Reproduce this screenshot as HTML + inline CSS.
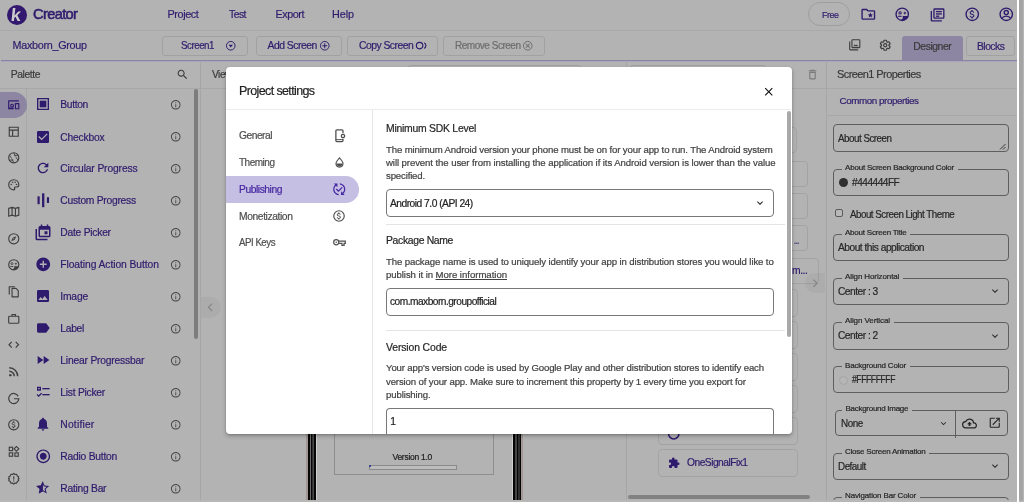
<!DOCTYPE html>
<html lang="en">
<head>
<meta charset="utf-8">
<title>Creator</title>
<style>
*{box-sizing:border-box;margin:0;padding:0}
html,body{width:1024px;height:502px;overflow:hidden}
body{background:#b3b3b3;font-family:"Liberation Sans",sans-serif;position:relative;color:#2f1b6d}
#w{position:absolute;left:0;top:0;width:1024px;height:502px;overflow:hidden;will-change:transform}
.a{position:absolute}
.t{position:absolute;white-space:nowrap;font-size:10.2px;line-height:12px;letter-spacing:-.1px;-webkit-text-stroke:.2px}
.tk{position:absolute;white-space:nowrap}
.p{color:#2f1b6d}
.g{color:#3d3d3d}
svg{position:absolute;overflow:visible}
/* top bar */
#topbar{left:0;top:0;width:1017px;height:31px;border-bottom:1px solid #a9a9a9}
#bar2{left:0;top:32px;width:1017px;height:28px}
#pline{left:1px;top:60px;width:1016px;height:2px;background:linear-gradient(#8a83a5 0,#8a83a5 50%,#aaa5b9 50%,#aaa5b9 100%)}
.btn{position:absolute;border:1px solid #a4a4a4;border-radius:3px;height:21px;top:36px}
/* palette */
.row{position:absolute;left:27px;width:166px;height:32px}
.row .t{left:33px;top:10px;font-size:10.2px}
/* props */
.fs{position:absolute;left:834px;width:175px;border:1px solid #5a5a5a;border-radius:4px}
.lg{position:absolute;left:7px;top:-6px;padding:0 4px;background:#b3b3b3;font-size:7.6px;line-height:10px;color:#2b2b2b;white-space:nowrap}
.fv{position:absolute;left:4px;top:7px;font-size:10px;line-height:12px;color:#2b2b2b;white-space:nowrap}
/* dialog */
#dlg{left:226px;top:67px;width:566px;height:367px;background:#fff;border-radius:4px;box-shadow:0 2px 4px rgba(0,0,0,.26),0 1px 2px rgba(0,0,0,.12);overflow:hidden;color:#333}
#dlg .para{position:absolute;left:160px;font-size:9.33px;line-height:13.33px;color:#404040;white-space:nowrap}
#dlg .h{position:absolute;left:160px;font-size:10.6px;line-height:13px;color:#2a2a2a;white-space:nowrap;word-spacing:1.5px}
#dlg .inp{position:absolute;left:160px;width:388px;height:28px;border:1px solid #7a7a7a;border-radius:4px}
#dlg .hr{position:absolute;left:160px;width:399px;height:1px;background:#e4e4e4}
.nav{position:absolute;left:13px;font-size:10.2px;line-height:12px;color:#555;white-space:nowrap}
.cbox{position:absolute;border:1px solid #a2a2a2;border-radius:4px;height:26px}
</style>
</head>
<body>
<div id="w">
<!-- TOPBAR -->
<div id="topbar" class="a"></div>
<div id="bar2" class="a"></div>
<div id="pline" class="a"></div>
<!-- top bar -->
<div class="a" style="left:6.9px;top:4.6px;width:20px;height:20px;border-radius:50%;background:#32186e"></div>
<div class="tk" style="left:11.4px;top:4.7px;font-size:18px;line-height:20px;font-weight:bold;color:#cbcbcb;letter-spacing:0;transform:skewX(-6deg)">k</div>
<div class="t" style="left:33.00px;top:5.90px;font-size:14.6px;line-height:17px;letter-spacing:-0.624px;color:#2f1b6d;-webkit-text-stroke:.55px;">Creator</div>
<div class="t" style="left:167.50px;top:7.20px;font-size:10.8px;line-height:14px;letter-spacing:-0.373px;color:#2f1b6d;">Project</div>
<div class="t" style="left:228.50px;top:7.20px;font-size:10.8px;line-height:14px;letter-spacing:-0.540px;color:#2f1b6d;transform:scaleX(0.9628);transform-origin:0 50%;">Test</div>
<div class="t" style="left:275.50px;top:7.20px;font-size:10.8px;line-height:14px;letter-spacing:-0.452px;color:#2f1b6d;">Export</div>
<div class="t" style="left:332.00px;top:7.20px;font-size:10.8px;line-height:14px;letter-spacing:-0.053px;color:#2f1b6d;">Help</div>
<div class="a" style="left:808px;top:2px;width:42px;height:24px;border:1px solid #9e9e9e;border-radius:12px"></div>
<div class="t" style="left:821.50px;top:8.60px;font-size:9.6px;line-height:12px;letter-spacing:-0.480px;color:#2f1b6d;transform:scaleX(0.9263);transform-origin:0 50%;">Free</div>
<svg style="left:860.10px;top:5.80px;color:#2f1b6d;" width="16.6" height="16.6" viewBox="0 0 24 24" fill="#2f1b6d"><path fill-rule="evenodd" d="M2 6a2 2 0 0 1 2-2h6l2 2h8a2 2 0 0 1 2 2v10a2 2 0 0 1-2 2H4a2 2 0 0 1-2-2zM4 6v12h16V8h-8.800l-2-2z"/><path d="M15 9.500l1.100 2.400 2.600.3-1.900 1.800.5 2.600-2.300-1.300-2.300 1.300.5-2.600-1.900-1.800 2.600-.3z"/></svg>
<svg style="left:894.15px;top:5.85px;color:#2f1b6d;" width="16.5" height="16.5" viewBox="0 0 24 24" fill="#2f1b6d"><circle cx="12" cy="12" r="9" fill="none" stroke="currentColor" stroke-width="2"/><circle cx="8.800" cy="10" r="1.700" fill="none" stroke="currentColor" stroke-width="1.500"/><path d="M15.800 7.800l.8 1.700 1.700.8-1.700.8-.8 1.700-.8-1.700-1.700-.8 1.700-.8z"/><path d="M12.500 14.500h8.300A9 9 0 0 1 10.500 20.800l.5-1.800 2-1z"/><rect x="6" y="14.200" width="5" height="1.600"/></svg>
<svg style="left:929.60px;top:6.60px;color:#2f1b6d;" width="15.8" height="15.8" viewBox="0 0 24 24" fill="#2f1b6d"><path fill-rule="evenodd" d="M7 2h13a2 2 0 0 1 2 2v12a2 2 0 0 1-2 2H7a2 2 0 0 1-2-2V4a2 2 0 0 1 2-2zM7 4v12h13V4z"/><path d="M1 6h2v14h15v2H3a2 2 0 0 1-2-2z"/><rect x="9" y="6" width="9" height="2"/><rect x="9" y="9.500" width="9" height="2"/><rect x="9" y="13" width="5" height="2"/></svg>
<svg style="left:963.75px;top:6.25px;color:#2f1b6d;" width="16.5" height="16.5" viewBox="0 0 24 24" fill="#2f1b6d"><circle cx="12" cy="12" r="9" fill="none" stroke="currentColor" stroke-width="2"/><g transform="translate(12 12) scale(.68) translate(-12 -12)"><path d="M11.8 10.9c-2.27-.59-3-1.2-3-2.15 0-1.09 1.01-1.85 2.7-1.85 1.78 0 2.44.85 2.5 2.1h2.21c-.07-1.72-1.12-3.3-3.21-3.81V3h-3v2.16c-1.94.42-3.5 1.68-3.5 3.61 0 2.31 1.91 3.46 4.7 4.13 2.5.6 3 1.48 3 2.41 0 .69-.49 1.79-2.7 1.79-2.06 0-2.87-.92-2.98-2.1h-2.2c.12 2.19 1.76 3.42 3.68 3.83V21h3v-2.15c1.95-.37 3.5-1.5 3.5-3.55 0-2.84-2.43-3.81-4.7-4.4z" /></g></svg>
<svg style="left:998.45px;top:6.25px;color:#2f1b6d;" width="16.5" height="16.5" viewBox="0 0 24 24" fill="#2f1b6d"><circle cx="12" cy="12" r="9" fill="none" stroke="currentColor" stroke-width="2"/><circle cx="12" cy="9.5" r="3" fill="none" stroke="currentColor" stroke-width="2"/><path d="M5.5 18.2c1.4-2.3 3.7-3.4 6.5-3.4s5.100 1.100 6.500 3.400" fill="none" stroke="currentColor" stroke-width="2"/></svg>
<!-- bar2 -->
<div class="t" style="left:12.50px;top:38.20px;font-size:10.8px;line-height:14px;letter-spacing:-0.295px;color:#2f1b6d;">Maxborn_Group</div>
<div class="a" style="left:161.5px;top:36px;width:86.0px;height:19.5px;border:1px solid #a1a1a1;border-radius:3px"></div>
<div class="t" style="left:181.00px;top:38.90px;font-size:10.4px;line-height:14px;letter-spacing:-0.520px;color:#2f1b6d;transform:scaleX(0.9412);transform-origin:0 50%;">Screen1</div>
<svg style="left:225.05px;top:39.65px;color:#2f1b6d;" width="11.5" height="11.5" viewBox="0 0 24 24" fill="#2f1b6d"><circle cx="12" cy="12" r="9" fill="none" stroke="currentColor" stroke-width="2"/><path d="M7.500 10h9L12 15.500z"/></svg>
<div class="a" style="left:256px;top:36px;width:85.5px;height:19.5px;border:1px solid #a1a1a1;border-radius:3px"></div>
<div class="t" style="left:267.50px;top:38.90px;font-size:10.4px;line-height:14px;letter-spacing:-0.511px;color:#2f1b6d;">Add Screen</div>
<svg style="left:319.25px;top:39.85px;color:#2f1b6d;" width="11.5" height="11.5" viewBox="0 0 24 24" fill="#2f1b6d"><circle cx="12" cy="12" r="9" fill="none" stroke="currentColor" stroke-width="2"/><path d="M11 7h2v4h4v2h-4v4h-2v-4H7v-2h4z"/></svg>
<div class="a" style="left:347px;top:36px;width:90.5px;height:19.5px;border:1px solid #a1a1a1;border-radius:3px"></div>
<div class="t" style="left:358.50px;top:38.90px;font-size:10.4px;line-height:14px;letter-spacing:-0.520px;color:#2f1b6d;transform:scaleX(0.9971);transform-origin:0 50%;">Copy Screen</div>
<svg style="left:414.50px;top:40.80px;color:#2f1b6d;" width="9.2" height="9.2" viewBox="0 0 24 24" fill="#2f1b6d"><circle cx="12" cy="12" r="8.5" fill="none" stroke="currentColor" stroke-width="3"/></svg>
<svg style="left:417.8px;top:40.8px;color:#2f1b6d" width="9.2" height="9.2" viewBox="0 0 24 24" fill="none"><path d="M16.300 4.600a8.500 8.500 0 0 1 0 14.800" stroke="currentColor" stroke-width="3"/></svg>
<div class="a" style="left:443px;top:36px;width:101.5px;height:19.5px;border:1px solid #a1a1a1;border-radius:3px"></div>
<div class="t" style="left:454.50px;top:38.90px;font-size:10.4px;line-height:14px;letter-spacing:-0.520px;color:#6d6d6d;transform:scaleX(0.9668);transform-origin:0 50%;">Remove Screen</div>
<svg style="left:521.75px;top:39.85px;color:#6d6d6d;" width="11.5" height="11.5" viewBox="0 0 24 24" fill="#6d6d6d"><circle cx="12" cy="12" r="9" fill="none" stroke="currentColor" stroke-width="2"/><path d="M8.500 7.100 12 10.600l3.500-3.500 1.400 1.400L13.400 12l3.500 3.500-1.400 1.400L12 13.400l-3.500 3.500-1.400-1.400L10.600 12 7.100 8.500z"/></svg>
<svg style="left:847.95px;top:37.85px;color:#3e3e3e;" width="13.5" height="13.5" viewBox="0 0 24 24" fill="#3e3e3e"><path fill-rule="evenodd" d="M8 2h12a2 2 0 0 1 2 2v12a2 2 0 0 1-2 2H8a2 2 0 0 1-2-2V4a2 2 0 0 1 2-2zM8 4v12h12V4z"/><path d="M2 6h2v14h14v2H4a2 2 0 0 1-2-2z"/><path d="M9.500 14.500l2.500-3.500 2 2.500 1.500-1.800 3 2.800z"/></svg>
<svg style="left:879.05px;top:38.55px;color:#3e3e3e;" width="12.5" height="12.5" viewBox="0 0 24 24" fill="#3e3e3e"><path d="M19.14 12.94c.04-.3.06-.61.06-.94 0-.32-.02-.64-.07-.94l2.03-1.58c.18-.14.23-.41.12-.61l-1.92-3.32c-.12-.22-.37-.29-.59-.22l-2.39.96c-.5-.38-1.03-.7-1.62-.94l-.36-2.54c-.04-.24-.24-.41-.48-.41h-3.84c-.24 0-.43.17-.47.41l-.36 2.54c-.59.24-1.13.57-1.62.94l-2.39-.96c-.22-.08-.47 0-.59.22L2.74 8.870c-.12.21-.08.47.12.61l2.030 1.580c-.05.3-.09.63-.09.94s.02.64.07.94l-2.030 1.580c-.18.14-.23.41-.12.61l1.920 3.320c.12.22.37.29.59.22l2.390-.96c.5.38 1.030.7 1.620.94l.36 2.540c.05.24.24.41.48.41h3.840c.24 0 .44-.17.47-.41l.36-2.540c.59-.24 1.130-.56 1.620-.94l2.390.96c.22.08.47 0 .59-.22l1.920-3.320c.12-.22.07-.47-.12-.61l-2.010-1.580z" fill="none" stroke="currentColor" stroke-width="2.3" stroke-linejoin="round"/><circle cx="12" cy="12" r="3" fill="none" stroke="currentColor" stroke-width="2.3"/></svg>
<div class="a" style="left:902px;top:36px;width:61px;height:24px;background:#8c86a2;border-radius:3px 3px 0 0"></div>
<div class="t" style="left:913.30px;top:40.00px;font-size:10.4px;line-height:14px;letter-spacing:-0.448px;color:#3a3a3a;">Designer</div>
<div class="a" style="left:965.5px;top:36px;width:49.0px;height:19.5px;border:1px solid #a1a1a1;border-radius:3px"></div>
<div class="t" style="left:977.00px;top:40.00px;font-size:10.4px;line-height:14px;letter-spacing:-0.520px;color:#2f1b6d;transform:scaleX(0.9933);transform-origin:0 50%;">Blocks</div>
<!-- palette -->
<div class="a" style="left:0px;top:62px;width:200px;height:26.5px;background:#b4b4b4;border-bottom:1px solid #a8a8a8"></div>
<div class="t" style="left:10.80px;top:68.00px;font-size:10.4px;line-height:14px;letter-spacing:-0.451px;color:#3d3d3d;">Palette</div>
<svg style="left:175.90px;top:67.70px;color:#3a3a3a;" width="13" height="13" viewBox="0 0 24 24" fill="#3a3a3a"><path d="M15.5 14h-.79l-.28-.27C15.41 12.59 16 11.11 16 9.5 16 5.91 13.09 3 9.5 3S3 5.91 3 9.5 5.91 16 9.5 16c1.61 0 3.09-.59 4.23-1.57l.27.28v.79l5 4.99L20.49 19l-4.99-5zm-6 0C7.01 14 5 11.99 5 9.5S7.01 5 9.5 5 14 7.01 14 9.5 11.99 14 9.5 14z" /></svg>
<div class="a" style="left:199.5px;top:62px;width:1.0px;height:440px;background:#a6a6a6"></div>
<div class="a" style="left:26px;top:89px;width:1px;height:413px;background:#a8a8a8"></div>
<div class="a" style="left:0px;top:91.7px;width:27px;height:26.5px;background:#8c86a2;border-radius:0 13.250px 13.250px 0"></div>
<svg style="left:6.75px;top:97.75px;color:#2f1b6d;" width="13.5" height="13.5" viewBox="0 0 24 24" fill="#2f1b6d"><path fill-rule="evenodd" d="M2 5a1 1 0 0 1 1-1h18v2H4v11h8v3H3a1 1 0 0 1-1-1zM15 9h6a1 1 0 0 1 1 1v9a1 1 0 0 1-1 1h-6a1 1 0 0 1-1-1v-9a1 1 0 0 1 1-1zM16 11v7h4v-7z"/><circle cx="9" cy="13.500" r="2.500" fill="none" stroke="currentColor" stroke-width="2"/></svg>
<svg style="left:6.75px;top:124.55px;color:#3e3e3e;" width="13.5" height="13.5" viewBox="0 0 24 24" fill="#3e3e3e"><path fill-rule="evenodd" d="M3 3h18v18H3zM5 5v3h14V5zM5 10v9h4v-9zM11 10v9h8v-9z"/></svg>
<svg style="left:6.75px;top:151.45px;color:#3e3e3e;" width="13.5" height="13.5" viewBox="0 0 24 24" fill="#3e3e3e"><circle cx="12" cy="12" r="9" fill="none" stroke="currentColor" stroke-width="2"/><g stroke="currentColor" stroke-width="1.500" fill="none"><path d="M12 3.500l3.200 6M19.400 7.700l-6.700.3M19.400 16.300l-3.700-5.700M12 20.500l-3.200-6M4.600 16.300l6.700-.3M4.600 7.700l3.700 5.700"/></g></svg>
<svg style="left:6.75px;top:178.45px;color:#3e3e3e;" width="13.5" height="13.5" viewBox="0 0 24 24" fill="#3e3e3e"><path d="M12 3a9 9 0 1 0 0 18c1.700 0 2.300-1.300 1.500-2.500-.800-1.200-.200-2.500 1.500-2.500h2.500A3.500 3.500 0 0 0 21 12.500C21 7 17 3 12 3z" fill="none" stroke="currentColor" stroke-width="2"/><circle cx="7.500" cy="11.500" r="1.400"/><circle cx="10" cy="7.500" r="1.400"/><circle cx="14.500" cy="7.500" r="1.400"/><circle cx="17" cy="11.500" r="1.400"/></svg>
<svg style="left:6.75px;top:205.05px;color:#3e3e3e;" width="13.5" height="13.5" viewBox="0 0 24 24" fill="#3e3e3e"><path d="M3 6l6-2 6 2 6-2v14l-6 2-6-2-6 2zM9 4v14M15 6v14" fill="none" stroke="currentColor" stroke-width="2" stroke-linejoin="round"/></svg>
<svg style="left:6.75px;top:231.55px;color:#3e3e3e;" width="13.5" height="13.5" viewBox="0 0 24 24" fill="#3e3e3e"><circle cx="12" cy="12" r="9" fill="none" stroke="currentColor" stroke-width="2"/><path fill-rule="evenodd" d="M16.500 7.500l-2.700 6.300-6.300 2.700 2.700-6.300zM12 11a1 1 0 1 0 0 2 1 1 0 0 0 0-2z"/></svg>
<svg style="left:6.75px;top:258.05px;color:#3e3e3e;" width="13.5" height="13.5" viewBox="0 0 24 24" fill="#3e3e3e"><circle cx="12" cy="12" r="9" fill="none" stroke="currentColor" stroke-width="2"/><circle cx="8.800" cy="10" r="1.700" fill="none" stroke="currentColor" stroke-width="1.500"/><path d="M15.800 7.800l.8 1.700 1.700.8-1.700.8-.8 1.700-.8-1.700-1.700-.8 1.700-.8z"/><path d="M12.500 14.500h8.300A9 9 0 0 1 10.500 20.800l.5-1.800 2-1z"/><rect x="6" y="14.200" width="5" height="1.600"/></svg>
<svg style="left:6.75px;top:285.05px;color:#3e3e3e;" width="13.5" height="13.5" viewBox="0 0 24 24" fill="#3e3e3e"><path d="M9 6h7l4 4v11H9z" fill="none" stroke="currentColor" stroke-width="2" stroke-linejoin="round"/><path d="M4 17V3h10" fill="none" stroke="currentColor" stroke-width="2"/></svg>
<svg style="left:6.75px;top:311.55px;color:#3e3e3e;" width="13.5" height="13.5" viewBox="0 0 24 24" fill="#3e3e3e"><rect x="3" y="7.500" width="18" height="12.500" rx="1.500" fill="none" stroke="currentColor" stroke-width="2"/><path d="M9 7.500V4.500h6v3" fill="none" stroke="currentColor" stroke-width="2"/></svg>
<svg style="left:6.75px;top:338.25px;color:#3e3e3e;" width="13.5" height="13.5" viewBox="0 0 24 24" fill="#3e3e3e"><path d="M8.500 7L3.500 12l5 5M15.500 7l5 5-5 5" fill="none" stroke="currentColor" stroke-width="2"/></svg>
<svg style="left:6.75px;top:364.95px;color:#3e3e3e;" width="13.5" height="13.5" viewBox="0 0 24 24" fill="#3e3e3e"><circle cx="6" cy="18" r="2.200"/><path d="M4 11a9 9 0 0 1 9 9M4 5a15 15 0 0 1 15 15" fill="none" stroke="currentColor" stroke-width="2.600"/></svg>
<svg style="left:6.75px;top:391.55px;color:#3e3e3e;" width="13.5" height="13.5" viewBox="0 0 24 24" fill="#3e3e3e"><path d="M20 7.500A9 9 0 1 0 21 12h-8.500" fill="none" stroke="currentColor" stroke-width="2.200"/></svg>
<svg style="left:6.75px;top:418.25px;color:#3e3e3e;" width="13.5" height="13.5" viewBox="0 0 24 24" fill="#3e3e3e"><circle cx="12" cy="12" r="9" fill="none" stroke="currentColor" stroke-width="2"/><g transform="translate(12 12) scale(.68) translate(-12 -12)"><path d="M11.8 10.9c-2.27-.59-3-1.2-3-2.15 0-1.09 1.01-1.85 2.7-1.85 1.78 0 2.44.85 2.5 2.1h2.21c-.07-1.72-1.12-3.3-3.21-3.81V3h-3v2.16c-1.94.42-3.5 1.68-3.5 3.61 0 2.31 1.91 3.46 4.7 4.13 2.5.6 3 1.48 3 2.41 0 .69-.49 1.79-2.7 1.79-2.06 0-2.87-.92-2.98-2.1h-2.2c.12 2.19 1.76 3.42 3.68 3.83V21h3v-2.15c1.95-.37 3.5-1.5 3.5-3.55 0-2.84-2.43-3.81-4.7-4.4z" /></g></svg>
<svg style="left:6.75px;top:444.95px;color:#3e3e3e;" width="13.5" height="13.5" viewBox="0 0 24 24" fill="#3e3e3e"><rect x="4" y="4" width="6" height="6" fill="none" stroke="currentColor" stroke-width="2"/><rect x="4" y="14" width="6" height="6" fill="none" stroke="currentColor" stroke-width="2"/><rect x="14" y="14" width="6" height="6" fill="none" stroke="currentColor" stroke-width="2"/><rect x="13.800" y="3.800" width="6" height="6" transform="rotate(45 16.800 6.800)" fill="none" stroke="currentColor" stroke-width="2"/></svg>
<svg style="left:6.75px;top:471.55px;color:#3e3e3e;" width="13.5" height="13.5" viewBox="0 0 24 24" fill="#3e3e3e"><path d="M12 2.500l2.200 2 3-.3.900 2.800 2.700 1.300-.800 2.900L21.500 12l-1.500.8.800 2.900-2.700 1.300-.900 2.800-3-.300-2.200 2-2.200-2-3 .300-.900-2.800-2.700-1.300.800-2.900L2.500 12l1.500-.8-.800-2.900 2.700-1.300.900-2.800 3 .3z" fill="none" stroke="currentColor" stroke-width="2" stroke-linejoin="round"/><rect x="11" y="7.500" width="2" height="6"/><rect x="11" y="15" width="2" height="2"/></svg>
<svg style="left:35.20px;top:96.00px;color:#2f1b6d;" width="16" height="16" viewBox="0 0 24 24" fill="#2f1b6d"><path fill-rule="evenodd" d="M3 3h18v18H3zM5 5v14h14V5z"/><rect x="7" y="7" width="10" height="10"/></svg>
<div class="t" style="left:60.30px;top:98.30px;font-size:10.3px;line-height:14px;letter-spacing:-0.348px;color:#2f1b6d;">Button</div>
<svg style="left:169.85px;top:98.65px;color:#4a4a4a;" width="11.5" height="11.5" viewBox="0 0 24 24" fill="#4a4a4a"><path d="M11 7h2v2h-2zm0 4h2v6h-2zm1-9C6.48 2 2 6.48 2 12s4.48 10 10 10 10-4.48 10-10S17.52 2 12 2zm0 18c-4.41 0-8-3.59-8-8s3.59-8 8-8 8 3.59 8 8-3.59 8-8 8z" /></svg>
<svg style="left:35.20px;top:128.50px;color:#2f1b6d;" width="16" height="16" viewBox="0 0 24 24" fill="#2f1b6d"><path d="M19 3H5c-1.11 0-2 .9-2 2v14c0 1.1.89 2 2 2h14c1.11 0 2-.9 2-2V5c0-1.1-.89-2-2-2zm-9 14l-5-5 1.41-1.41L10 14.17l7.59-7.59L19 8l-9 9z" /></svg>
<div class="t" style="left:60.30px;top:130.80px;font-size:10.3px;line-height:14px;letter-spacing:-0.199px;color:#2f1b6d;">Checkbox</div>
<svg style="left:169.85px;top:131.15px;color:#4a4a4a;" width="11.5" height="11.5" viewBox="0 0 24 24" fill="#4a4a4a"><path d="M11 7h2v2h-2zm0 4h2v6h-2zm1-9C6.48 2 2 6.48 2 12s4.48 10 10 10 10-4.48 10-10S17.52 2 12 2zm0 18c-4.41 0-8-3.59-8-8s3.59-8 8-8 8 3.59 8 8-3.59 8-8 8z" /></svg>
<svg style="left:35.20px;top:160.00px;color:#2f1b6d;" width="16" height="16" viewBox="0 0 24 24" fill="#2f1b6d"><path d="M17.65 6.35C16.2 4.9 14.21 4 12 4c-4.42 0-7.99 3.58-7.99 8s3.57 8 7.99 8c3.73 0 6.84-2.55 7.73-6h-2.08c-.82 2.33-3.04 4-5.65 4-3.31 0-6-2.69-6-6s2.69-6 6-6c1.66 0 3.14.69 4.22 1.78L13 11h7V4l-2.35 2.35z" /></svg>
<div class="t" style="left:60.30px;top:162.30px;font-size:10.3px;line-height:14px;letter-spacing:-0.138px;color:#2f1b6d;">Circular Progress</div>
<svg style="left:169.85px;top:162.65px;color:#4a4a4a;" width="11.5" height="11.5" viewBox="0 0 24 24" fill="#4a4a4a"><path d="M11 7h2v2h-2zm0 4h2v6h-2zm1-9C6.48 2 2 6.48 2 12s4.48 10 10 10 10-4.48 10-10S17.52 2 12 2zm0 18c-4.41 0-8-3.59-8-8s3.59-8 8-8 8 3.59 8 8-3.59 8-8 8z" /></svg>
<svg style="left:35.95px;top:192.75px;color:#2f1b6d;" width="14.5" height="14.5" viewBox="0 0 24 24" fill="#2f1b6d"><rect x="2.500" y="5.500" width="3.600" height="13"/><rect x="10" y="0.500" width="3.800" height="23"/><rect x="18" y="7" width="3.600" height="9.500"/></svg>
<div class="t" style="left:60.30px;top:194.30px;font-size:10.3px;line-height:14px;letter-spacing:-0.270px;color:#2f1b6d;">Custom Progress</div>
<svg style="left:169.85px;top:194.65px;color:#4a4a4a;" width="11.5" height="11.5" viewBox="0 0 24 24" fill="#4a4a4a"><path d="M11 7h2v2h-2zm0 4h2v6h-2zm1-9C6.48 2 2 6.48 2 12s4.48 10 10 10 10-4.48 10-10S17.52 2 12 2zm0 18c-4.41 0-8-3.59-8-8s3.59-8 8-8 8 3.59 8 8-3.59 8-8 8z" /></svg>
<svg style="left:34.20px;top:223.00px;color:#2f1b6d;" width="18" height="18" viewBox="0 0 24 24" fill="#2f1b6d"><path fill-rule="evenodd" d="M9 2h2v2h6V2h2v2h1a2 2 0 0 1 2 2v11a2 2 0 0 1-2 2H8a2 2 0 0 1-2-2V6a2 2 0 0 1 2-2h1zM8 9v8h12V9z"/><rect x="14" y="11" width="4" height="4"/><path d="M2 8h2v13h14v2H4a2 2 0 0 1-2-2z"/></svg>
<div class="t" style="left:60.30px;top:226.30px;font-size:10.3px;line-height:14px;letter-spacing:-0.248px;color:#2f1b6d;">Date Picker</div>
<svg style="left:169.85px;top:226.65px;color:#4a4a4a;" width="11.5" height="11.5" viewBox="0 0 24 24" fill="#4a4a4a"><path d="M11 7h2v2h-2zm0 4h2v6h-2zm1-9C6.48 2 2 6.48 2 12s4.48 10 10 10 10-4.48 10-10S17.52 2 12 2zm0 18c-4.41 0-8-3.59-8-8s3.59-8 8-8 8 3.59 8 8-3.59 8-8 8z" /></svg>
<svg style="left:34.95px;top:255.75px;color:#2f1b6d;" width="16.5" height="16.5" viewBox="0 0 24 24" fill="#2f1b6d"><path d="M12 2C6.48 2 2 6.48 2 12s4.48 10 10 10 10-4.48 10-10S17.52 2 12 2zm5 11h-4v4h-2v-4H7v-2h4V7h2v4h4v2z" /></svg>
<div class="t" style="left:60.30px;top:258.30px;font-size:10.3px;line-height:14px;letter-spacing:-0.076px;color:#2f1b6d;">Floating Action Button</div>
<svg style="left:169.85px;top:258.65px;color:#4a4a4a;" width="11.5" height="11.5" viewBox="0 0 24 24" fill="#4a4a4a"><path d="M11 7h2v2h-2zm0 4h2v6h-2zm1-9C6.48 2 2 6.48 2 12s4.48 10 10 10 10-4.48 10-10S17.52 2 12 2zm0 18c-4.41 0-8-3.59-8-8s3.59-8 8-8 8 3.59 8 8-3.59 8-8 8z" /></svg>
<svg style="left:35.20px;top:288.00px;color:#2f1b6d;" width="16" height="16" viewBox="0 0 24 24" fill="#2f1b6d"><path d="M21 19V5c0-1.1-.9-2-2-2H5c-1.1 0-2 .9-2 2v14c0 1.1.9 2 2 2h14c1.1 0 2-.9 2-2zM8.5 13.5l2.5 3.01L14.5 12l4.5 6H5l3.5-4.5z" /></svg>
<div class="t" style="left:60.30px;top:290.30px;font-size:10.3px;line-height:14px;letter-spacing:-0.187px;color:#2f1b6d;">Image</div>
<svg style="left:169.85px;top:290.65px;color:#4a4a4a;" width="11.5" height="11.5" viewBox="0 0 24 24" fill="#4a4a4a"><path d="M11 7h2v2h-2zm0 4h2v6h-2zm1-9C6.48 2 2 6.48 2 12s4.48 10 10 10 10-4.48 10-10S17.52 2 12 2zm0 18c-4.41 0-8-3.59-8-8s3.59-8 8-8 8 3.59 8 8-3.59 8-8 8z" /></svg>
<svg style="left:35.20px;top:320.00px;color:#2f1b6d;" width="16" height="16" viewBox="0 0 24 24" fill="#2f1b6d"><path d="M17.63 5.84C17.27 5.33 16.67 5 16 5L5 5.01C3.9 5.01 3 5.9 3 7v10c0 1.1.9 1.99 2 1.99L16 19c.67 0 1.27-.33 1.63-.84L22 12l-4.37-6.16z" /></svg>
<div class="t" style="left:60.30px;top:322.30px;font-size:10.3px;line-height:14px;letter-spacing:-0.302px;color:#2f1b6d;">Label</div>
<svg style="left:169.85px;top:322.65px;color:#4a4a4a;" width="11.5" height="11.5" viewBox="0 0 24 24" fill="#4a4a4a"><path d="M11 7h2v2h-2zm0 4h2v6h-2zm1-9C6.48 2 2 6.48 2 12s4.48 10 10 10 10-4.48 10-10S17.52 2 12 2zm0 18c-4.41 0-8-3.59-8-8s3.59-8 8-8 8 3.59 8 8-3.59 8-8 8z" /></svg>
<svg style="left:35.20px;top:352.00px;color:#2f1b6d;" width="16" height="16" viewBox="0 0 24 24" fill="#2f1b6d"><path d="M4 18l8.5-6L4 6v12zm9-12v12l8.5-6L13 6z" /></svg>
<div class="t" style="left:60.30px;top:354.30px;font-size:10.3px;line-height:14px;letter-spacing:-0.199px;color:#2f1b6d;">Linear Progressbar</div>
<svg style="left:169.85px;top:354.65px;color:#4a4a4a;" width="11.5" height="11.5" viewBox="0 0 24 24" fill="#4a4a4a"><path d="M11 7h2v2h-2zm0 4h2v6h-2zm1-9C6.48 2 2 6.48 2 12s4.48 10 10 10 10-4.48 10-10S17.52 2 12 2zm0 18c-4.41 0-8-3.59-8-8s3.59-8 8-8 8 3.59 8 8-3.59 8-8 8z" /></svg>
<svg style="left:35.20px;top:384.00px;color:#2f1b6d;" width="16" height="16" viewBox="0 0 24 24" fill="#2f1b6d"><path fill-rule="evenodd" d="M3 4h6v6H3zM5 6v2h2V6z"/><rect x="11" y="6" width="11" height="2"/><rect x="11" y="15" width="11" height="2"/><path d="M5.6 19.6 2.4 16.4l1.4-1.4 1.8 1.8 3.6-3.6 1.4 1.4z"/></svg>
<div class="t" style="left:60.30px;top:386.30px;font-size:10.3px;line-height:14px;letter-spacing:-0.254px;color:#2f1b6d;">List Picker</div>
<svg style="left:169.85px;top:386.65px;color:#4a4a4a;" width="11.5" height="11.5" viewBox="0 0 24 24" fill="#4a4a4a"><path d="M11 7h2v2h-2zm0 4h2v6h-2zm1-9C6.48 2 2 6.48 2 12s4.48 10 10 10 10-4.48 10-10S17.52 2 12 2zm0 18c-4.41 0-8-3.59-8-8s3.59-8 8-8 8 3.59 8 8-3.59 8-8 8z" /></svg>
<svg style="left:35.20px;top:416.00px;color:#2f1b6d;" width="16" height="16" viewBox="0 0 24 24" fill="#2f1b6d"><path d="M12 22c1.1 0 2-.9 2-2h-4c0 1.1.89 2 2 2zm6-6v-5c0-3.07-1.64-5.64-4.5-6.32V4c0-.83-.67-1.5-1.5-1.5s-1.5.67-1.5 1.5v.68C7.63 5.36 6 7.92 6 11v5l-2 2v1h16v-1l-2-2z" /></svg>
<div class="t" style="left:60.30px;top:418.30px;font-size:10.3px;line-height:14px;letter-spacing:0.198px;color:#2f1b6d;">Notifier</div>
<svg style="left:169.85px;top:418.65px;color:#4a4a4a;" width="11.5" height="11.5" viewBox="0 0 24 24" fill="#4a4a4a"><path d="M11 7h2v2h-2zm0 4h2v6h-2zm1-9C6.48 2 2 6.48 2 12s4.48 10 10 10 10-4.48 10-10S17.52 2 12 2zm0 18c-4.41 0-8-3.59-8-8s3.59-8 8-8 8 3.59 8 8-3.59 8-8 8z" /></svg>
<svg style="left:34.95px;top:447.75px;color:#2f1b6d;" width="16.5" height="16.5" viewBox="0 0 24 24" fill="#2f1b6d"><path d="M12 7c-2.76 0-5 2.24-5 5s2.24 5 5 5 5-2.24 5-5-2.24-5-5-5zm0-5C6.48 2 2 6.48 2 12s4.48 10 10 10 10-4.48 10-10S17.52 2 12 2zm0 18c-4.42 0-8-3.58-8-8s3.58-8 8-8 8 3.58 8 8-3.58 8-8 8z" /></svg>
<div class="t" style="left:60.30px;top:450.30px;font-size:10.3px;line-height:14px;letter-spacing:-0.237px;color:#2f1b6d;">Radio Button</div>
<svg style="left:169.85px;top:450.65px;color:#4a4a4a;" width="11.5" height="11.5" viewBox="0 0 24 24" fill="#4a4a4a"><path d="M11 7h2v2h-2zm0 4h2v6h-2zm1-9C6.48 2 2 6.48 2 12s4.48 10 10 10 10-4.48 10-10S17.52 2 12 2zm0 18c-4.41 0-8-3.59-8-8s3.59-8 8-8 8 3.59 8 8-3.59 8-8 8z" /></svg>
<svg style="left:35.45px;top:480.25px;color:#2f1b6d;" width="15.5" height="15.5" viewBox="0 0 24 24" fill="#2f1b6d"><path d="M22 9.24l-7.19-.62L12 2 9.19 8.63 2 9.24l5.46 4.73L5.82 21 12 17.27 18.18 21l-1.63-7.03L22 9.24zM12 15.4V6.1l1.71 4.04 4.38.38-3.32 2.88 1 4.28L12 15.4z" /><path d="M12 2 9.19 8.63 2 9.24l5.46 4.73L5.82 21 12 17.27z" /></svg>
<div class="t" style="left:60.30px;top:482.30px;font-size:10.3px;line-height:14px;letter-spacing:-0.266px;color:#2f1b6d;">Rating Bar</div>
<svg style="left:169.85px;top:482.65px;color:#4a4a4a;" width="11.5" height="11.5" viewBox="0 0 24 24" fill="#4a4a4a"><path d="M11 7h2v2h-2zm0 4h2v6h-2zm1-9C6.48 2 2 6.48 2 12s4.48 10 10 10 10-4.48 10-10S17.52 2 12 2zm0 18c-4.41 0-8-3.59-8-8s3.59-8 8-8 8 3.59 8 8-3.59 8-8 8z" /></svg>
<div class="a" style="left:194px;top:89px;width:3.8000000000000114px;height:250px;background:#7d7d7d;border-radius:2px"></div>
<div class="a" style="left:200.5px;top:297px;width:20.19999999999999px;height:20.5px;background:rgba(0,0,0,.035);border-radius:0 10.250px 10.250px 0"></div>
<svg style="left:202.15px;top:299.45px;color:#878787;" width="16.5" height="16.5" viewBox="0 0 24 24" fill="#878787"><path d="M15.41 7.41L14 6l-6 6 6 6 1.41-1.41L10.83 12z" /></svg>
<!-- viewer -->
<div class="t" style="left:212.00px;top:68.00px;font-size:10.4px;line-height:14px;letter-spacing:-0.520px;color:#3d3d3d;transform:scaleX(0.9841);transform-origin:0 50%;">Viewer</div>
<div class="a" style="left:408px;top:65px;width:173px;height:25px;border:1px solid #a1a1a1;border-radius:3px"></div>
<div class="a" style="left:630px;top:65px;width:136px;height:25px;border:1px solid #a1a1a1;border-radius:3px"></div>
<div class="a" style="left:200.5px;top:88px;width:425.0px;height:1px;background:#a8a8a8"></div>
<div class="a" style="left:305px;top:150px;width:13px;height:350px;background:linear-gradient(90deg,transparent 0.00px,transparent 0.80px,#a19694 0.90px,#a19694 2.70px,#060606 2.90px,#060606 4.50px,#6a6a6a 4.80px,#6a6a6a 5.80px,#060606 6.10px,#060606 7.30px,#484848 7.60px,#484848 9.00px,#060606 9.30px,#060606 10.90px,#d0d0d0 11.10px,#d0d0d0 12.20px,transparent 12.30px,transparent 13.00px)"></div>
<div class="a" style="left:511px;top:150px;width:13px;height:350px;background:linear-gradient(90deg,transparent 0.00px,transparent 0.80px,#cfcfcf 0.90px,#cfcfcf 1.90px,#060606 2.10px,#060606 3.70px,#444444 4.00px,#444444 6.00px,#060606 6.30px,#060606 6.90px,#303030 7.20px,#303030 8.80px,#060606 9.10px,#060606 10.00px,#a39896 10.20px,#a39896 11.90px,transparent 12.00px,transparent 13.00px)"></div>
<div class="a" style="left:333.5px;top:120px;width:160.5px;height:354.5px;border:1px solid #8f8f8f"></div>
<div class="t" style="left:392.50px;top:451.50px;font-size:8.5px;line-height:11px;letter-spacing:-0.277px;color:#1c1c1c;">Version 1.0</div>
<div class="a" style="left:368.5px;top:464.5px;width:88.5px;height:5.0px;border:1px solid #8a8a8a;background:#bcbcbc"></div>
<div class="a" style="left:369px;top:465px;width:1.5px;height:1.5px;background:#3b4a8a"></div>
<!-- components -->
<div class="a" style="left:625.5px;top:62px;width:1.0px;height:440px;background:#a6a6a6"></div>
<div class="a" style="left:626px;top:88px;width:200px;height:1px;background:#a8a8a8"></div>
<svg style="left:805.50px;top:67.50px;color:#7a7a7a;" width="13" height="13" viewBox="0 0 24 24" fill="#7a7a7a"><path d="M6 19c0 1.1.9 2 2 2h8c1.1 0 2-.9 2-2V7H6v12zM8 9h8v10H8V9zm7.5-5l-1-1h-5l-1 1H5v2h14V4z" /></svg>
<div class="a" style="left:640px;top:127px;width:156.5px;height:25.5px;border:1px solid #a3a3a3;border-radius:4px"></div>
<div class="a" style="left:650px;top:160.5px;width:157.5px;height:26.0px;border:1px solid #a3a3a3;border-radius:4px"></div>
<div class="a" style="left:650px;top:192.5px;width:157.5px;height:26.0px;border:1px solid #a3a3a3;border-radius:4px"></div>
<div class="a" style="left:650px;top:224.5px;width:157.5px;height:26.0px;border:1px solid #a3a3a3;border-radius:4px"></div>
<div class="a" style="left:660px;top:257.5px;width:158.5px;height:26.0px;border:1px solid #a3a3a3;border-radius:4px"></div>
<div class="a" style="left:657.5px;top:289px;width:140.0px;height:27.5px;border:1px solid #a3a3a3;border-radius:4px"></div>
<div class="a" style="left:657.5px;top:321px;width:140.0px;height:27.5px;border:1px solid #a3a3a3;border-radius:4px"></div>
<div class="a" style="left:657.5px;top:353px;width:140.0px;height:27.5px;border:1px solid #a3a3a3;border-radius:4px"></div>
<div class="a" style="left:657.5px;top:385px;width:140.0px;height:27.5px;border:1px solid #a3a3a3;border-radius:4px"></div>
<div class="a" style="left:657.5px;top:417px;width:140.0px;height:27.5px;border:1px solid #a3a3a3;border-radius:4px"></div>
<div class="a" style="left:657.5px;top:449px;width:140.0px;height:27.5px;border:1px solid #a3a3a3;border-radius:4px"></div>
<div class="t" style="left:794.00px;top:233.50px;font-size:10.3px;line-height:14px;letter-spacing:-0.515px;color:#2f1b6d;transform:scaleX(0.7096);transform-origin:0 50%;">...</div>
<div class="t" style="left:792.00px;top:264.30px;font-size:10.3px;line-height:14px;letter-spacing:-0.442px;color:#2f1b6d;">m...</div>
<div class="a" style="left:804.7px;top:272.7px;width:20.799999999999955px;height:20.600000000000023px;background:rgba(0,0,0,.035);border-radius:10.250px 0 0 10.250px"></div>
<svg style="left:806.55px;top:274.95px;color:#878787;" width="16.5" height="16.5" viewBox="0 0 24 24" fill="#878787"><path d="M10 6L8.59 7.41 13.17 12l-4.58 4.59L10 18l6-6z" /></svg>
<svg style="left:666.25px;top:426.45px;color:#2f1b6d;" width="15.5" height="15.5" viewBox="0 0 24 24" fill="#2f1b6d"><circle cx="12" cy="12" r="8" fill="none" stroke="currentColor" stroke-width="2.4"/></svg>
<svg style="left:667.80px;top:457.00px;color:#2f1b6d;" width="12" height="12" viewBox="0 0 24 24" fill="#2f1b6d"><path d="M20.500 11H19V7a2 2 0 0 0-2-2h-4V3.500a2.500 2.500 0 0 0-5 0V5H4a2 2 0 0 0-2 2v3.800h1.500a2.700 2.700 0 0 1 0 5.400H2V20a2 2 0 0 0 2 2h3.800v-1.500a2.700 2.700 0 0 1 5.400 0V22H17a2 2 0 0 0 2-2v-4h1.500a2.500 2.500 0 0 0 0-5z"/></svg>
<div class="t" style="left:687.00px;top:456.30px;font-size:10.3px;line-height:14px;letter-spacing:-0.515px;color:#2f1b6d;transform:scaleX(0.9943);transform-origin:0 50%;">OneSignalFix1</div>
<div class="a" style="left:627.5px;top:494.5px;width:182.0px;height:4.5px;background:#828282;border-radius:2px"></div>
<!-- properties -->
<div class="a" style="left:825.5px;top:62px;width:1.0px;height:440px;background:#a6a6a6"></div>
<div class="a" style="left:826.5px;top:88px;width:190.5px;height:1px;background:#a8a8a8"></div>
<div class="a" style="left:826.5px;top:115px;width:190.5px;height:1px;background:#a8a8a8"></div>
<div class="t" style="left:836.80px;top:67.30px;font-size:11.2px;line-height:14px;letter-spacing:-0.560px;color:#383838;transform:scaleX(0.9768);transform-origin:0 50%;">Screen1 Properties</div>
<div class="t" style="left:839.50px;top:94.30px;font-size:9.8px;line-height:13px;letter-spacing:-0.414px;color:#2f1b6d;">Common properties</div>
<div class="a" style="left:833px;top:123.5px;width:175.5px;height:28.5px;border:1px solid #5e5e5e;border-radius:4px"></div>
<div class="t" style="left:838.00px;top:132.00px;font-size:10.3px;line-height:14px;letter-spacing:-0.515px;color:#262626;transform:scaleX(0.9517);transform-origin:0 50%;">About Screen</div>
<svg style="left:999px;top:142.500px" width="7" height="7" viewBox="0 0 7 7"><path d="M6.500 1 1 6.500M6.500 4 4 6.500" stroke="#3a3a3a" stroke-width="1" fill="none"/></svg>
<div class="a" style="left:833px;top:168.5px;width:175.5px;height:27.0px;border:1px solid #5e5e5e;border-radius:4px"></div>
<div class="a" style="left:841.5px;top:164.7px;width:116.0px;height:6.0px;background:#b3b3b3"></div>
<div class="t" style="left:845.00px;top:162.90px;font-size:8px;line-height:10px;letter-spacing:-0.198px;color:#262626;">About Screen Background Color</div>
<div class="a" style="left:838.5px;top:177.9px;width:9.0px;height:9.0px;background:#2f2f2f;border-radius:50%"></div>
<div class="t" style="left:852.00px;top:176.00px;font-size:10.3px;line-height:14px;letter-spacing:-0.515px;color:#262626;transform:scaleX(0.9848);transform-origin:0 50%;">#444444FF</div>
<div class="a" style="left:834.5px;top:208.7px;width:8.5px;height:8.5px;border:1px solid #5a5a5a;border-radius:2px;background:#b8b8b8"></div>
<div class="t" style="left:850.00px;top:208.00px;font-size:10.3px;line-height:14px;letter-spacing:-0.515px;color:#262626;transform:scaleX(0.9486);transform-origin:0 50%;">About Screen Light Theme</div>
<div class="a" style="left:833px;top:234px;width:175.5px;height:27px;border:1px solid #5e5e5e;border-radius:4px"></div>
<div class="a" style="left:841.5px;top:229.7px;width:68.5px;height:6.0px;background:#b3b3b3"></div>
<div class="t" style="left:845.00px;top:227.90px;font-size:8px;line-height:10px;letter-spacing:-0.216px;color:#262626;">About Screen Title</div>
<div class="t" style="left:838.00px;top:241.30px;font-size:10.3px;line-height:14px;letter-spacing:-0.515px;color:#262626;transform:scaleX(0.9935);transform-origin:0 50%;">About this application</div>
<div class="a" style="left:833px;top:278px;width:175.5px;height:27px;border:1px solid #5e5e5e;border-radius:4px"></div>
<div class="a" style="left:841.5px;top:273.9px;width:61.299999999999955px;height:6.0px;background:#b3b3b3"></div>
<div class="t" style="left:845.00px;top:272.10px;font-size:8px;line-height:10px;letter-spacing:-0.109px;color:#262626;">Align Horizontal</div>
<div class="t" style="left:838.00px;top:284.80px;font-size:10.3px;line-height:14px;letter-spacing:-0.515px;color:#262626;transform:scaleX(0.9930);transform-origin:0 50%;">Center : 3</div>
<svg style="left:989.20px;top:285.00px;color:#2a2a2a;" width="12" height="12" viewBox="0 0 24 24" fill="#2a2a2a"><path d="M16.59 8.59L12 13.17 7.41 8.59 6 10l6 6 6-6z" /></svg>
<div class="a" style="left:833px;top:322px;width:175.5px;height:27.5px;border:1px solid #5e5e5e;border-radius:4px"></div>
<div class="a" style="left:841.5px;top:317.7px;width:52.0px;height:6.0px;background:#b3b3b3"></div>
<div class="t" style="left:845.00px;top:315.90px;font-size:8px;line-height:10px;letter-spacing:-0.090px;color:#262626;">Align Vertical</div>
<div class="t" style="left:838.00px;top:329.20px;font-size:10.3px;line-height:14px;letter-spacing:-0.515px;color:#262626;transform:scaleX(0.9930);transform-origin:0 50%;">Center : 2</div>
<svg style="left:989.20px;top:329.50px;color:#2a2a2a;" width="12" height="12" viewBox="0 0 24 24" fill="#2a2a2a"><path d="M16.59 8.59L12 13.17 7.41 8.59 6 10l6 6 6-6z" /></svg>
<div class="a" style="left:833px;top:366px;width:175.5px;height:27px;border:1px solid #5e5e5e;border-radius:4px"></div>
<div class="a" style="left:841.5px;top:362.3px;width:68.0px;height:6.0px;background:#b3b3b3"></div>
<div class="t" style="left:845.00px;top:360.50px;font-size:8px;line-height:10px;letter-spacing:-0.190px;color:#262626;">Background Color</div>
<div class="a" style="left:838.5px;top:375.5px;width:9.0px;height:9.0px;background:#b6b6b6;border:1px solid #a4a4a4;border-radius:50%"></div>
<div class="t" style="left:852.00px;top:373.30px;font-size:10.3px;line-height:14px;letter-spacing:-0.515px;color:#262626;transform:scaleX(0.8362);transform-origin:0 50%;">#FFFFFFFF</div>
<div class="a" style="left:834.5px;top:410px;width:173.0px;height:26px;border:1px solid #5e5e5e;border-radius:4px"></div>
<div class="a" style="left:842.0px;top:405.3px;width:69.70000000000005px;height:6.0px;background:#b3b3b3"></div>
<div class="t" style="left:845.50px;top:403.50px;font-size:8px;line-height:10px;letter-spacing:-0.280px;color:#262626;">Background Image</div>
<div class="t" style="left:841.30px;top:416.80px;font-size:10.3px;line-height:14px;letter-spacing:-0.515px;color:#262626;transform:scaleX(0.9618);transform-origin:0 50%;">None</div>
<svg style="left:937.80px;top:417.80px;color:#2a2a2a;" width="11" height="11" viewBox="0 0 24 24" fill="#2a2a2a"><path d="M16.59 8.59L12 13.17 7.41 8.59 6 10l6 6 6-6z" /></svg>
<div class="a" style="left:954.8px;top:410.5px;width:1.0px;height:27.5px;background:#5e5e5e"></div>
<svg style="left:961.50px;top:415.50px;color:#262626;" width="15" height="15" viewBox="0 0 24 24" fill="#262626"><path d="M19.350 10.040A7.490 7.490 0 0 0 12 4C9.110 4 6.600 5.640 5.350 8.040A5.994 5.994 0 0 0 0 14c0 3.310 2.690 6 6 6h13c2.760 0 5-2.240 5-5 0-2.640-2.050-4.780-4.650-4.960zM19 18H6c-2.210 0-4-1.790-4-4s1.790-4 4-4h.71C7.370 7.690 9.480 6 12 6c3.040 0 5.500 2.460 5.500 5.500v.5H19c1.660 0 3 1.340 3 3s-1.340 3-3 3z"/><path d="M8 13h2.550v3h2.900v-3H16l-4-4z"/></svg>
<svg style="left:988.45px;top:416.25px;color:#262626;" width="13.5" height="13.5" viewBox="0 0 24 24" fill="#262626"><path d="M19 19H5V5h7V3H5a2 2 0 0 0-2 2v14a2 2 0 0 0 2 2h14c1.100 0 2-.900 2-2v-7h-2v7zM14 3v2h3.590l-9.830 9.830 1.410 1.410L19 6.410V10h2V3h-7z"/></svg>
<div class="a" style="left:833px;top:452.5px;width:175.5px;height:27.0px;border:1px solid #5e5e5e;border-radius:4px"></div>
<div class="a" style="left:841.5px;top:448.3px;width:87.5px;height:6.0px;background:#b3b3b3"></div>
<div class="t" style="left:845.00px;top:446.50px;font-size:8px;line-height:10px;letter-spacing:-0.222px;color:#262626;">Close Screen Animation</div>
<div class="t" style="left:838.00px;top:459.80px;font-size:10.3px;line-height:14px;letter-spacing:-0.515px;color:#262626;transform:scaleX(0.9576);transform-origin:0 50%;">Default</div>
<svg style="left:989.20px;top:460.00px;color:#2a2a2a;" width="12" height="12" viewBox="0 0 24 24" fill="#2a2a2a"><path d="M16.59 8.59L12 13.17 7.41 8.59 6 10l6 6 6-6z" /></svg>
<div class="a" style="left:833px;top:496.5px;width:175.5px;height:28.5px;border:1px solid #5e5e5e;border-radius:4px"></div>
<div class="a" style="left:841.5px;top:492.6px;width:78.0px;height:6.0px;background:#b3b3b3"></div>
<div class="t" style="left:845.00px;top:490.80px;font-size:8px;line-height:10px;letter-spacing:-0.141px;color:#262626;">Navigation Bar Color</div>
<div class="a" style="left:1016.7px;top:0px;width:2.2999999999999545px;height:502px;background:#fff"></div>
<div class="a" style="left:1019px;top:0px;width:5px;height:502px;background:#b6b6b6"></div>
<div class="a" style="left:1019.3px;top:-4px;width:3.7000000000000455px;height:504.6px;background:#a5a5a5;border-radius:2px"></div>
<div class="a" style="left:0px;top:500px;width:1017px;height:2px;background:#b7b7b7"></div>
<!-- dialog -->
<div id="dlg" class="a"></div>
<div class="t" style="left:239.00px;top:83.30px;font-size:12.6px;line-height:16px;letter-spacing:-0.630px;color:#1e1e1e;transform:scaleX(0.9930);transform-origin:0 50%;">Project settings</div>
<svg style="left:761.65px;top:84.85px;color:#111;" width="13.5" height="13.5" viewBox="0 0 24 24" fill="#111"><path d="M19 6.41L17.59 5 12 10.59 6.41 5 5 6.41 10.59 12 5 17.59 6.41 19 12 13.41 17.59 19 19 17.59 13.41 12z" /></svg>
<div class="a" style="left:226px;top:108.5px;width:564.5px;height:1.0px;background:#ececec"></div>
<div class="a" style="left:371.5px;top:109.5px;width:1.0px;height:324.5px;background:#e6e6e6"></div>
<div class="a" style="left:226px;top:176px;width:132.5px;height:26.5px;background:#c6bfe4;border-radius:0 13.250px 13.250px 0"></div>
<div class="t" style="left:239.00px;top:129.00px;font-size:10.3px;line-height:14px;letter-spacing:-0.515px;color:#4f4f4f;transform:scaleX(0.9991);transform-origin:0 50%;">General</div>
<div class="t" style="left:239.00px;top:155.80px;font-size:10.3px;line-height:14px;letter-spacing:-0.515px;color:#4f4f4f;transform:scaleX(0.9734);transform-origin:0 50%;">Theming</div>
<div class="t" style="left:239.00px;top:182.80px;font-size:10.3px;line-height:14px;letter-spacing:-0.452px;color:#4527a0;">Publishing</div>
<div class="t" style="left:239.00px;top:209.50px;font-size:10.3px;line-height:14px;letter-spacing:-0.408px;color:#4f4f4f;">Monetization</div>
<div class="t" style="left:239.00px;top:236.00px;font-size:10.3px;line-height:14px;letter-spacing:-0.515px;color:#4f4f4f;transform:scaleX(0.9415);transform-origin:0 50%;">API Keys</div>
<svg style="left:331.55px;top:127.85px;color:#4f4f4f;" width="15.5" height="15.5" viewBox="0 0 24 24" fill="#4f4f4f"><path d="M17 8V4.500a1.500 1.500 0 0 0-1.500-1.500h-8A1.500 1.500 0 0 0 6 4.500v15A1.500 1.500 0 0 0 7.500 21h8a1.500 1.500 0 0 0 1.500-1.500V17" fill="none" stroke="currentColor" stroke-width="2"/><circle cx="17" cy="12.500" r="2.600" fill="none" stroke="currentColor" stroke-width="2"/><path d="M6 18h11" stroke="currentColor" stroke-width="1.500"/></svg>
<svg style="left:332.50px;top:155.50px;color:#4f4f4f;" width="13" height="13" viewBox="0 0 24 24" fill="#4f4f4f"><path d="M12 3.500c3 3.300 6.500 6.800 6.500 10.500a6.500 6.500 0 0 1-13 0c0-3.700 3.500-7.200 6.500-10.500z" fill="none" stroke="currentColor" stroke-width="2"/><path d="M5.800 14h12.400a6.300 6.300 0 0 1-12.400 0z"/></svg>
<svg style="left:331.75px;top:181.75px;color:#4527a0;" width="14.5" height="14.5" viewBox="0 0 24 24" fill="#4527a0"><path d="M17.660 9.530l-7.070 7.070-4.240-4.240 1.410-1.410 2.830 2.830 5.660-5.660 1.410 1.410zM4 12c0-2.330 1.020-4.420 2.620-5.880L9 8.500v-6H3l2.200 2.200C3.240 6.520 2 9.110 2 12c0 5.190 3.950 9.450 9 9.950v-2.020c-3.940-.49-7-3.860-7-7.930zm18 0c0-5.190-3.950-9.450-9-9.950v2.020c3.940.49 7 3.860 7 7.930 0 2.330-1.020 4.420-2.620 5.880L15 15.500v6h6l-2.200-2.200c1.960-1.820 3.200-4.410 3.200-7.300z"/></svg>
<svg style="left:332.00px;top:208.70px;color:#4f4f4f;" width="14" height="14" viewBox="0 0 24 24" fill="#4f4f4f"><circle cx="12" cy="12" r="9" fill="none" stroke="currentColor" stroke-width="2"/><g transform="translate(12 12) scale(.68) translate(-12 -12)"><path d="M11.8 10.9c-2.27-.59-3-1.2-3-2.15 0-1.09 1.01-1.85 2.7-1.85 1.78 0 2.44.85 2.5 2.1h2.21c-.07-1.72-1.12-3.3-3.21-3.81V3h-3v2.16c-1.94.42-3.5 1.68-3.5 3.61 0 2.31 1.91 3.46 4.7 4.13 2.5.6 3 1.48 3 2.41 0 .69-.49 1.79-2.7 1.79-2.06 0-2.87-.92-2.98-2.1h-2.2c.12 2.19 1.76 3.42 3.68 3.83V21h3v-2.15c1.95-.37 3.5-1.5 3.5-3.55 0-2.84-2.43-3.81-4.7-4.4z" /></g></svg>
<svg style="left:331.75px;top:235.05px;color:#4f4f4f;" width="14.5" height="14.5" viewBox="0 0 24 24" fill="#4f4f4f"><circle cx="7" cy="12" r="4.200" fill="none" stroke="currentColor" stroke-width="2"/><circle cx="7" cy="12" r="1.300"/><path d="M11 10h11v4h-2v3h-3.500v-3H11" fill="none" stroke="currentColor" stroke-width="2"/></svg>
<div class="t" style="left:386.00px;top:122.00px;font-size:10.4px;line-height:14px;letter-spacing:-0.243px;color:#262626;">Minimum SDK Level</div>
<div class="t" style="left:386.00px;top:142.53px;font-size:9.6px;line-height:13.33px;letter-spacing:-0.137px;color:#414141;">The minimum Android version your phone must be on for your app to run. The Android system</div>
<div class="t" style="left:386.00px;top:155.87px;font-size:9.6px;line-height:13.33px;letter-spacing:-0.088px;color:#414141;">will prevent the user from installing the application if its Android version is lower than the value</div>
<div class="t" style="left:386.00px;top:169.19px;font-size:9.6px;line-height:13.33px;letter-spacing:-0.154px;color:#414141;">specified.</div>
<div class="a" style="left:385.5px;top:189px;width:388.0px;height:28px;border:1px solid #787878;border-radius:4px"></div>
<div class="t" style="left:390.30px;top:196.80px;font-size:10.3px;line-height:14px;letter-spacing:-0.515px;color:#222;transform:scaleX(0.9964);transform-origin:0 50%;">Android 7.0 (API 24)</div>
<svg style="left:754.00px;top:196.70px;color:#222;" width="12" height="12" viewBox="0 0 24 24" fill="#222"><path d="M16.59 8.59L12 13.17 7.41 8.59 6 10l6 6 6-6z" /></svg>
<div class="a" style="left:386px;top:224px;width:399px;height:1px;background:#e4e4e4"></div>
<div class="t" style="left:386.00px;top:234.00px;font-size:10.4px;line-height:14px;letter-spacing:-0.336px;color:#262626;">Package Name</div>
<div class="t" style="left:386.00px;top:255.14px;font-size:9.6px;line-height:13.33px;letter-spacing:-0.119px;color:#414141;">The package name is used to uniquely identify your app in distribution stores you would like to</div>
<div class="t" style="left:386.00px;top:268.44px;font-size:9.6px;line-height:13.33px;letter-spacing:-0.078px;color:#414141;">publish it in</div>
<div class="t" style="left:435.50px;top:268.44px;font-size:9.6px;line-height:13.33px;letter-spacing:-0.031px;color:#414141;text-decoration:underline;">More information</div>
<div class="a" style="left:385.5px;top:288px;width:388.0px;height:28px;border:1px solid #787878;border-radius:4px"></div>
<div class="t" style="left:390.30px;top:295.30px;font-size:10.3px;line-height:14px;letter-spacing:-0.515px;color:#222;transform:scaleX(0.9861);transform-origin:0 50%;">com.maxborn.groupofficial</div>
<div class="a" style="left:386px;top:330px;width:399px;height:1px;background:#e4e4e4"></div>
<div class="t" style="left:386.00px;top:341.00px;font-size:10.4px;line-height:14px;letter-spacing:-0.116px;color:#262626;">Version Code</div>
<div class="t" style="left:386.00px;top:361.33px;font-size:9.6px;line-height:13.33px;letter-spacing:-0.138px;color:#414141;">Your app&#x27;s version code is used by Google Play and other distribution stores to identify each</div>
<div class="t" style="left:386.00px;top:374.66px;font-size:9.6px;line-height:13.33px;letter-spacing:-0.135px;color:#414141;">version of your app. Make sure to increment this property by 1 every time you export for</div>
<div class="t" style="left:386.00px;top:388.00px;font-size:9.6px;line-height:13.33px;letter-spacing:-0.126px;color:#414141;">publishing.</div>
<div class="a" style="left:385.5px;top:407.5px;width:388.0px;height:26.5px;border:1px solid #787878;border-radius:4px;border-bottom:none;border-radius:4px 4px 0 0"></div>
<div class="t" style="left:390.30px;top:414.50px;font-size:10.3px;line-height:14px;letter-spacing:0.000px;color:#222;">1</div>
<div class="a" style="left:786.8px;top:110.8px;width:3.800000000000068px;height:226.7px;background:#a9a9a9;border-radius:2px"></div>
</div>
</body>
</html>
